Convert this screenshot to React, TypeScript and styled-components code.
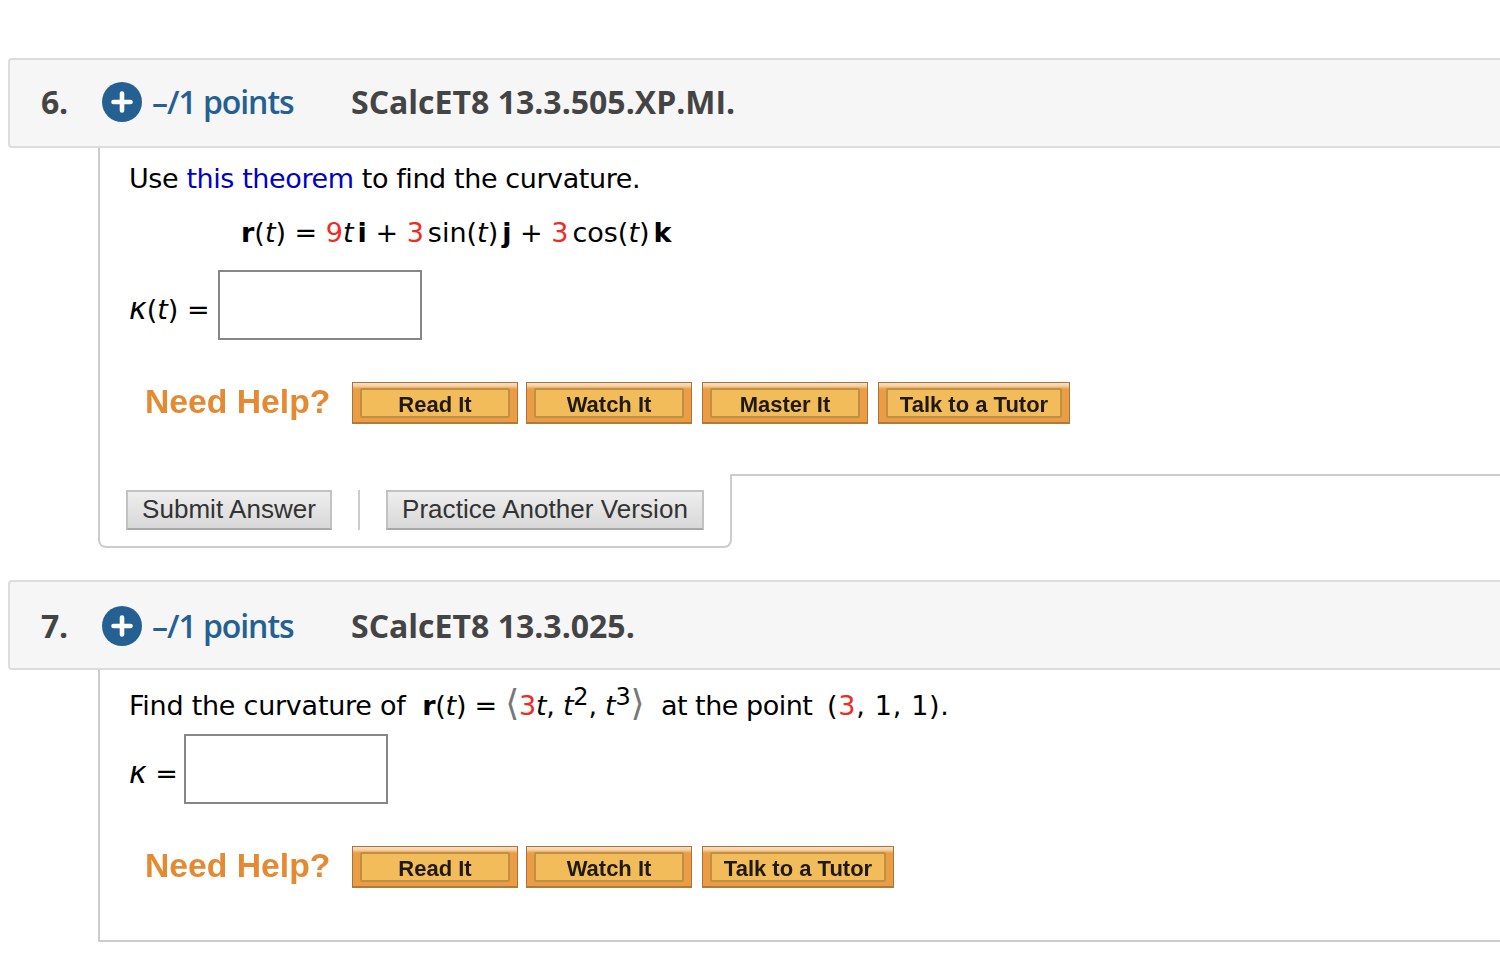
import { createGlobalStyle, styled } from "styled-components";

const GlobalStyle = createGlobalStyle`
  html, body {
    margin: 0;
    padding: 0;
    background: #fff;
    overflow: hidden;
  }
  body {
    font-family: "DejaVu Sans", sans-serif;
  }
`;

const HelpButton = ({ label, wide }: { label: string; wide?: number }) => (
  <OrangeButton $width={wide ?? 166}>
    <OrangeInner>
      <OrangeLabel>{label}</OrangeLabel>
    </OrangeInner>
  </OrangeButton>
);

const QuestionHeader = ({ num, title, shift }: { num: string; title: string; shift: number }) => (
  <Header $shift={shift}>
    <Num>{num}</Num>
    <PlusCircle>
      <svg width="40" height="40" viewBox="0 0 40 40">
        <circle cx="20" cy="20" r="20" fill="#246092" />
        <path d="M20 11.5v17M11.5 20h17" stroke="#fff" strokeWidth="4.6" strokeLinecap="round" />
      </svg>
    </PlusCircle>
    <Points>–/1 points</Points>
    <Title>{title}</Title>
  </Header>
);

export default function App() {
  return (
    <Page>
      <GlobalStyle />
      <QuestionHeader num="6." title="SCalcET8 13.3.505.XP.MI." shift={-1} />
      <Body>
        <LineOpen>
          Use <TheoremLink>this theorem</TheoremLink> to find the curvature.
        </LineOpen>
        <MathRow>
          <b>r</b>(<i>t</i>) = <Red>9</Red>
          <i>t</i>
          <Thin />
          <b>i</b> + <Red>3</Red>
          <Thin />
          sin(<i>t</i>)<Thin />
          <b>j</b> + <Red>3</Red>
          <Thin />
          cos(<i>t</i>)<Thin />
          <b>k</b>
        </MathRow>
        <AnswerRow $top={17}>
          <AnswerLabel $width={89}>
            <Kappa>κ</Kappa>(<i>t</i>) =
          </AnswerLabel>
          <AnswerInput />
        </AnswerRow>
        <HelpRow>
          <NeedHelp>Need Help?</NeedHelp>
          <HelpButton label="Read It" />
          <Gap8 />
          <HelpButton label="Watch It" />
          <Gap10 />
          <HelpButton label="Master It" />
          <Gap10 />
          <HelpButton label="Talk to a Tutor" wide={192} />
        </HelpRow>
      </Body>
      <ActionRow>
        <ActionBox>
          <GreyButton $width={206}>Submit Answer</GreyButton>
          <Divider />
          <GreyButton $width={318}>Practice Another Version</GreyButton>
        </ActionBox>
        <ActionFiller />
      </ActionRow>

      <NextQuestion>
        <QuestionHeader num="7." title="SCalcET8 13.3.025." shift={1} />
        <BodyClosed>
          <LineVerdana>
            Find the curvature of&nbsp; <b>r</b>(<i>t</i>) = <Bracket>⟨</Bracket>
            <Red>3</Red>
            <i>t</i>, <i>t</i>
            <Sup>2</Sup>, <i>t</i>
            <Sup>3</Sup>
            <Bracket>⟩</Bracket>&nbsp; <PointWords>at the point</PointWords>&nbsp;{" "}
            <PointCoords>
              (<Red>3</Red>, 1, 1).
            </PointCoords>
          </LineVerdana>
          <AnswerRow $top={8}>
            <AnswerLabel $width={55}>
              <Kappa>κ</Kappa> =
            </AnswerLabel>
            <AnswerInput />
          </AnswerRow>
          <HelpRow>
            <NeedHelp>Need Help?</NeedHelp>
            <HelpButton label="Read It" />
            <Gap8 />
            <HelpButton label="Watch It" />
            <Gap10 />
            <HelpButton label="Talk to a Tutor" wide={192} />
          </HelpRow>
        </BodyClosed>
      </NextQuestion>
    </Page>
  );
}

const Page = styled.div`
  width: 1500px;
  height: 956px;
  box-sizing: border-box;
  padding: 58px 0 0 8px;
  overflow: hidden;
`;

const Header = styled.div<{ $shift: number }>`
  display: flex;
  align-items: center;
  width: 1520px;
  height: 90px;
  box-sizing: border-box;
  padding-left: 31px;
  padding-top: ${(p) => (p.$shift > 0 ? p.$shift * 2 : 0)}px;
  padding-bottom: ${(p) => (p.$shift < 0 ? -p.$shift * 2 : 0)}px;
  background: #f6f6f6;
  border: 2px solid #dcdcdc;
  border-radius: 4px;
  font-family: "Open Sans", sans-serif;
  font-size: 32px;
`;

const Num = styled.div`
  width: 61px;
  margin-top: -2px;
  font-weight: 700;
  color: #444;
  letter-spacing: -0.3px;
`;

const PlusCircle = styled.div`
  width: 40px;
  height: 40px;
  margin-right: 11px;
  svg {
    display: block;
  }
`;

const Points = styled.div`
  width: 198px;
  margin: -2px 1px 0 -1px;
  letter-spacing: -1.05px;
  font-weight: 600;
  color: #246092;
  white-space: nowrap;
`;

const Title = styled.div`
  margin-top: -2px;
  font-weight: 700;
  color: #444;
  white-space: nowrap;
`;

const Body = styled.div`
  margin-left: 90px;
  padding: 11px 0 50px 29px;
  border-left: 2px solid #ccc;
`;

const BodyClosed = styled.div`
  margin-left: 90px;
  padding: 16px 0 52px 29px;
  border-left: 2px solid #ccc;
  border-bottom: 2px solid #ccc;
`;

const LineOpen = styled.div`
  height: 40px;
  line-height: 40px;
  font-size: 27px;
  letter-spacing: -0.41px;
  color: #000;
  white-space: nowrap;
`;

const LineVerdana = styled.div`
  height: 40px;
  line-height: 40px;
  font-size: 27px;
  letter-spacing: -0.25px;
  color: #000;
  white-space: nowrap;
`;

const PointWords = styled.span`
  letter-spacing: -0.5px;
`;

const PointCoords = styled.span`
  margin-left: -2px;
  letter-spacing: 0.7px;
`;

const TheoremLink = styled.a`
  color: #0000c8;
`;

const MathRow = styled.div`
  height: 40px;
  line-height: 40px;
  margin: 14px 0 0 112px;
  font-size: 27px;
  color: #000;
  white-space: nowrap;
`;

const Red = styled.span`
  color: #ee2c24;
`;

const Thin = styled.span`
  display: inline-block;
  width: 4px;
`;

const Sup = styled.sup`
  font-size: 24px;
  line-height: 0;
`;

const Bracket = styled.span`
  font-size: 36px;
  line-height: 0;
  color: #777;
`;

const Kappa = styled.i`
  font-size: 30px;
  font-weight: 500;
`;

const AnswerRow = styled.div<{ $top: number }>`
  display: flex;
  align-items: center;
  height: 70px;
  margin-top: ${(p) => p.$top}px;
`;

const AnswerLabel = styled.div<{ $width: number }>`
  width: ${(p) => p.$width}px;
  padding-top: 6px;
  font-size: 27px;
  color: #000;
  white-space: nowrap;
`;

const AnswerInput = styled.input`
  width: 204px;
  height: 70px;
  box-sizing: border-box;
  padding: 0;
  background: #fff;
  border: 2px solid #868686;
  border-radius: 0;
  outline: none;
`;

const HelpRow = styled.div`
  display: flex;
  align-items: center;
  height: 42px;
  margin-top: 42px;
`;

const NeedHelp = styled.div`
  width: 223px;
  padding: 0 0 4px 16px;
  box-sizing: border-box;
  font-family: "Liberation Sans", sans-serif;
  font-size: 33.7px;
  font-weight: 700;
  color: #e38a33;
  white-space: nowrap;
  filter: blur(0.6px);
`;

const OrangeButton = styled.div<{ $width: number }>`
  width: ${(p) => p.$width}px;
  height: 42px;
  box-sizing: border-box;
  padding: 5px 7px 4px 7px;
  background: linear-gradient(#f9e0c4 0, #f5cfa2 3px, #ea9d45 6px);
  border: 1px solid #a9743a;
  border-bottom: 2px solid #b07a3c;
`;

const OrangeInner = styled.div`
  height: 100%;
  box-sizing: border-box;
  display: flex;
  align-items: center;
  justify-content: center;
  padding-top: 3px;
  background: #f2bc5a;
  border: 2px solid #bd9045;
  border-radius: 2px;
`;

const OrangeLabel = styled.span`
  font-family: "Liberation Sans", sans-serif;
  font-size: 22px;
  font-weight: 700;
  color: #1f1a10;
  white-space: nowrap;
  filter: blur(0.5px);
`;

const Gap8 = styled.div`
  width: 8px;
`;

const Gap10 = styled.div`
  width: 10px;
`;

const ActionRow = styled.div`
  display: flex;
  margin-left: 90px;
  width: 1402px;
`;

const ActionBox = styled.div`
  display: flex;
  align-items: center;
  box-sizing: border-box;
  padding: 16px 26px;
  border-left: 2px solid #ccc;
  border-right: 2px solid #ccc;
  border-bottom: 2px solid #ccc;
  border-radius: 0 0 8px 8px;
`;

const ActionFiller = styled.div`
  flex: 1;
  border-top: 2px solid #ccc;
  margin-left: -2px;
`;

const GreyButton = styled.div<{ $width: number }>`
  width: ${(p) => p.$width}px;
  height: 40px;
  box-sizing: border-box;
  padding: 0 0 2px 14px;
  display: flex;
  align-items: center;
  background: linear-gradient(#eeeeee, #d8d8d8);
  border: 2px solid #c2c2c2;
  border-bottom-color: #a8a8a8;
  font-family: "Liberation Sans", sans-serif;
  font-size: 26px;
  letter-spacing: 0.05px;
  color: #333;
  white-space: nowrap;
`;

const Divider = styled.div`
  width: 2px;
  height: 40px;
  margin: 0 26px;
  background: #ccc;
`;

const NextQuestion = styled.div`
  margin-top: 32px;
`;
